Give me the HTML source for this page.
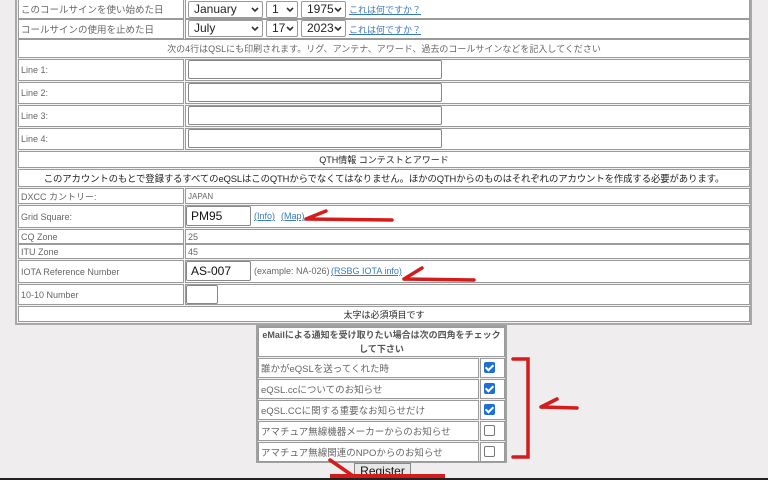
<!DOCTYPE html>
<html><head><meta charset="utf-8"><style>
*{box-sizing:border-box;margin:0;padding:0}
body{width:768px;height:480px;background:#efeded;position:relative;overflow:hidden;font-family:"Liberation Sans","Noto Sans CJK JP",sans-serif;font-size:9px;color:#666}
.o{position:absolute;left:15px;top:-3px;width:737px;height:328px;border:2px solid #a8a8a8;border-top:none;background:#f2f2f2}
.c{position:absolute;background:#fff;border:1px solid #9a9a9a;display:flex;align-items:center;padding-left:2px;white-space:nowrap;overflow:hidden}
.ctr{justify-content:center;padding-left:0}
.sel{position:absolute;height:17px;border:1px solid #999;background:#fff;font-size:12px;color:#222;padding-left:5px;line-height:15px;border-radius:2px}
.sel svg{position:absolute;right:3px;top:5px}
.lk{position:absolute;color:#3a7ac0;text-decoration:underline;font-size:9px}
.in{position:absolute;background:#fff;border:1px solid #888;border-radius:2px}
.cb{position:absolute;width:11px;height:11px;border-radius:2px}
.on{background:#1a6fd8}
.on:after{content:"";position:absolute;left:3px;top:1px;width:3px;height:6px;border:solid #fff;border-width:0 2px 2px 0;transform:rotate(45deg)}
.off{border:1px solid #777;background:#fff}
.j{font-size:9.5px}
</style></head><body>
<div class="o"></div>
<div class="c j" style="left:18px;top:-1px;width:166px;height:20px">このコールサインを使い始めた日</div>
<div class="c" style="left:185px;top:-1px;width:565px;height:20px"></div>
<div class="c j" style="left:18px;top:19px;width:166px;height:20px">コールサインの使用を止めた日</div>
<div class="c" style="left:185px;top:19px;width:565px;height:20px"></div>
<div class="sel" style="left:188px;top:1px;width:75px">January<svg width="8" height="6"><path d="M1 1L4 4L7 1" stroke="#333" stroke-width="1.6" fill="none"/></svg></div>
<div class="sel" style="left:266px;top:1px;width:32px">1<svg width="8" height="6"><path d="M1 1L4 4L7 1" stroke="#333" stroke-width="1.6" fill="none"/></svg></div>
<div class="sel" style="left:301px;top:1px;width:45px">1975<svg width="8" height="6"><path d="M1 1L4 4L7 1" stroke="#333" stroke-width="1.6" fill="none"/></svg></div>
<div class="lk" style="left:349px;top:3px">これは何ですか？</div>
<div class="sel" style="left:188px;top:20px;width:75px">July<svg width="8" height="6"><path d="M1 1L4 4L7 1" stroke="#333" stroke-width="1.6" fill="none"/></svg></div>
<div class="sel" style="left:266px;top:20px;width:32px">17<svg width="8" height="6"><path d="M1 1L4 4L7 1" stroke="#333" stroke-width="1.6" fill="none"/></svg></div>
<div class="sel" style="left:301px;top:20px;width:45px">2023<svg width="8" height="6"><path d="M1 1L4 4L7 1" stroke="#333" stroke-width="1.6" fill="none"/></svg></div>
<div class="lk" style="left:349px;top:23px">これは何ですか？</div>
<div class="c ctr" style="left:18px;top:39px;width:732px;height:19px">次の4行はQSLにも印刷されます。リグ、アンテナ、アワード、過去のコールサインなどを記入してください</div>
<div class="c" style="left:18px;top:59px;width:166px;height:22px">Line 1:</div><div class="c" style="left:185px;top:59px;width:565px;height:22px"></div><div class="in" style="left:188px;top:60px;width:254px;height:19px"></div>
<div class="c" style="left:18px;top:82px;width:166px;height:22px">Line 2:</div><div class="c" style="left:185px;top:82px;width:565px;height:22px"></div><div class="in" style="left:188px;top:83px;width:254px;height:19px"></div>
<div class="c" style="left:18px;top:105px;width:166px;height:22px">Line 3:</div><div class="c" style="left:185px;top:105px;width:565px;height:22px"></div><div class="in" style="left:188px;top:106px;width:254px;height:19px"></div>
<div class="c" style="left:18px;top:128px;width:166px;height:22px">Line 4:</div><div class="c" style="left:185px;top:128px;width:565px;height:22px"></div><div class="in" style="left:188px;top:129px;width:254px;height:19px"></div>
<div class="c ctr" style="left:18px;top:151px;width:732px;height:17px;color:#222">QTH情報 コンテストとアワード</div>
<div class="c ctr" style="left:18px;top:169px;width:732px;height:18px;color:#222;font-size:9.4px;letter-spacing:-0.1px">このアカウントのもとで登録するすべてのeQSLはこのQTHからでなくてはなりません。ほかのQTHからのものはそれぞれのアカウントを作成する必要があります。</div>
<div class="c" style="left:18px;top:188px;width:166px;height:16px">DXCC カントリー:</div><div class="c" style="left:185px;top:188px;width:565px;height:16px;font-size:8px">JAPAN</div>
<div class="c" style="left:18px;top:205px;width:166px;height:23px">Grid Square:</div><div class="c" style="left:185px;top:205px;width:565px;height:23px"></div>
<div class="in" style="left:186px;top:206px;width:65px;height:20px;font-size:12px;color:#111;padding:2px 0 0 4px">PM95</div>
<div class="lk" style="left:254px;top:211px">(Info)</div><div class="lk" style="left:281px;top:211px">(Map)</div>
<div class="c" style="left:18px;top:229px;width:166px;height:15px">CQ Zone</div><div class="c" style="left:185px;top:229px;width:565px;height:15px">25</div>
<div class="c" style="left:18px;top:244px;width:166px;height:15px">ITU Zone</div><div class="c" style="left:185px;top:244px;width:565px;height:15px">45</div>
<div class="c" style="left:18px;top:260px;width:166px;height:23px">IOTA Reference Number</div><div class="c" style="left:185px;top:260px;width:565px;height:23px"></div>
<div class="in" style="left:186px;top:261px;width:65px;height:20px;font-size:12px;color:#111;padding:2px 0 0 4px">AS-007</div>
<div style="position:absolute;left:254px;top:266px">(example: NA-026)</div><div class="lk" style="left:331px;top:266px">(RSBG IOTA info)</div>
<div class="c" style="left:18px;top:284px;width:166px;height:21px">10-10 Number</div><div class="c" style="left:185px;top:284px;width:565px;height:21px"></div>
<div class="in" style="left:186px;top:285px;width:32px;height:19px"></div>
<div class="c ctr" style="left:18px;top:306px;width:732px;height:16px;color:#222">太字は必須項目です</div>

<div style="position:absolute;left:256px;top:325px;width:251px;height:138px;border:2px solid #a0a0a0;background:#f2f2f2"></div>
<div class="c ctr" style="left:258px;top:327px;width:247px;height:30px;white-space:normal;text-align:center;font-weight:bold;color:#555;line-height:14px">eMailによる通知を受け取りたい場合は次の四角をチェックして下さい</div>
<div class="c j" style="left:258px;top:358px;width:221px;height:20px">誰かがeQSLを送ってくれた時</div><div class="c" style="left:480px;top:358px;width:25px;height:20px"></div>
<div class="c j" style="left:258px;top:379px;width:221px;height:20px">eQSL.ccについてのお知らせ</div><div class="c" style="left:480px;top:379px;width:25px;height:20px"></div>
<div class="c j" style="left:258px;top:400px;width:221px;height:20px">eQSL.CCに関する重要なお知らせだけ</div><div class="c" style="left:480px;top:400px;width:25px;height:20px"></div>
<div class="c j" style="left:258px;top:421px;width:221px;height:20px">アマチュア無線機器メーカーからのお知らせ</div><div class="c" style="left:480px;top:421px;width:25px;height:20px"></div>
<div class="c j" style="left:258px;top:442px;width:221px;height:20px">アマチュア無線関連のNPOからのお知らせ</div><div class="c" style="left:480px;top:442px;width:25px;height:20px"></div>
<div class="cb on" style="left:484px;top:362px"></div>
<div class="cb on" style="left:484px;top:383px"></div>
<div class="cb on" style="left:484px;top:404px"></div>
<div class="cb off" style="left:484px;top:425px"></div>
<div class="cb off" style="left:484px;top:446px"></div>
<div style="position:absolute;left:354px;top:463px;width:57px;height:17px;background:#e8e8e8;border:1px solid #888;font-size:12px;color:#111;text-align:center;line-height:15px">Register</div>

<svg style="position:absolute;left:0;top:0" width="768" height="480">
<g stroke="#d41c1c" stroke-width="3.5" fill="none" stroke-linecap="round">
<path d="M306 219 L326 211 M306 219 L392 220"/>
<path d="M404 279 L422 268 M404 279 L474 280"/>
<path d="M513 359 L528 359 L528 457 L513 457"/>
<path d="M541 407 L557 399 M541 407 L577 408"/>
<path d="M330 460 L356 478"/>
</g>
<rect x="330" y="474" width="115" height="6" fill="#d41c1c"/>
<rect x="0" y="478" width="768" height="2" fill="#222"/>
</svg>
</body></html>
